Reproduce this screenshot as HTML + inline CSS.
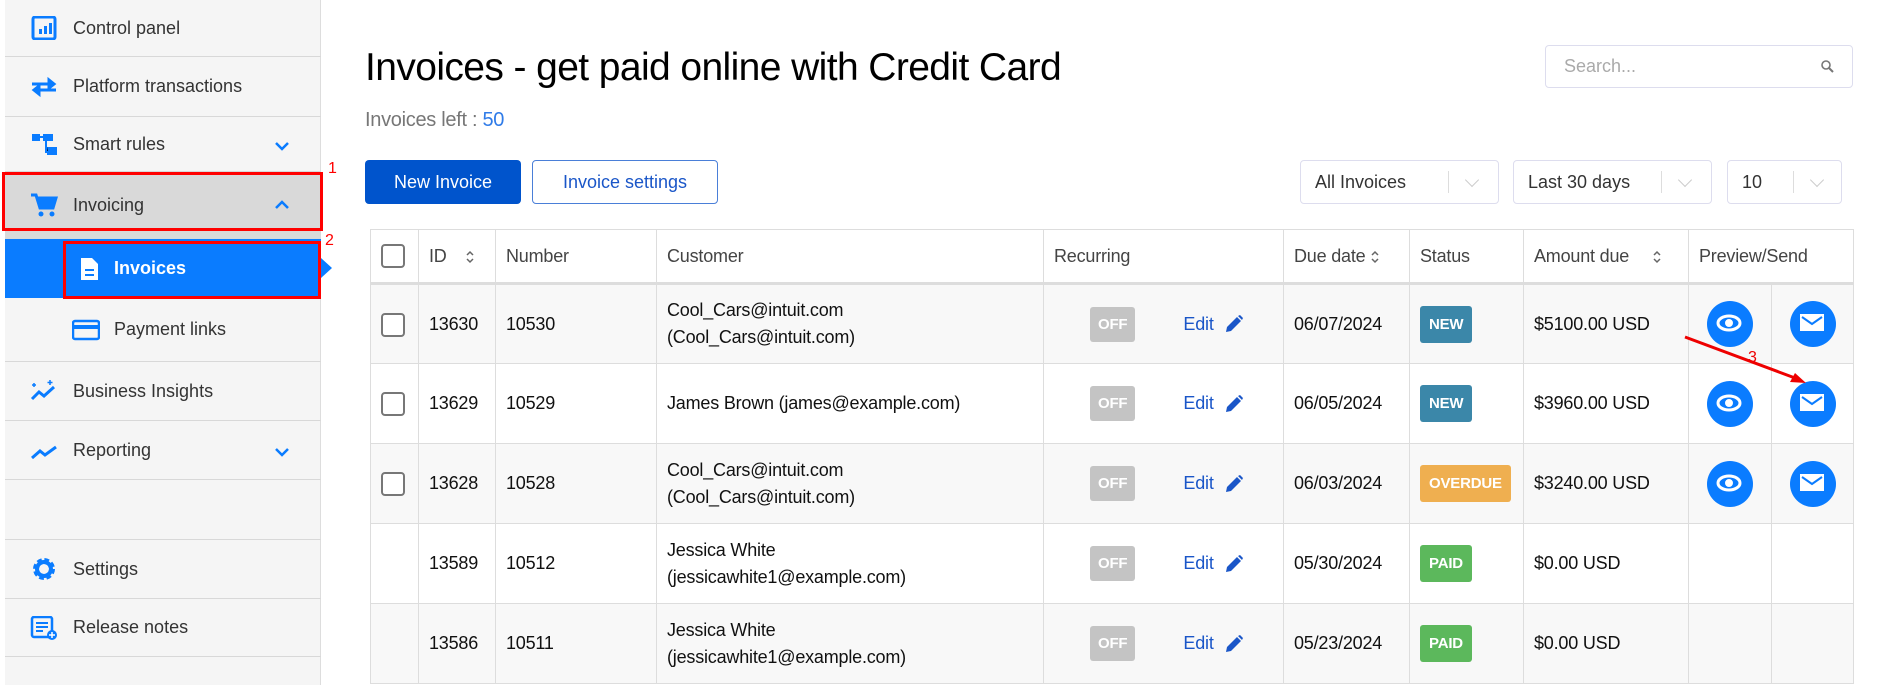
<!DOCTYPE html>
<html><head><meta charset="utf-8"><style>
*{box-sizing:border-box;margin:0;padding:0}
body{width:1897px;height:685px;overflow:hidden;background:#fff;font-family:"Liberation Sans",sans-serif;position:relative;color:#111}
.a{position:absolute}
.side{position:absolute;left:5px;top:0;width:316px;height:685px;background:#f5f5f5;border-right:1px solid #ddd}
.it{position:absolute;left:0;width:316px;border-bottom:1px solid #d8d8d8;font-size:18px;color:#333;display:flex;align-items:center}
.it .t{position:absolute;left:68px}
.it .ic{position:absolute;left:25px;width:28px;height:24px}
.chev{position:absolute;left:270px;width:14px;height:14px}
th,td{border:1px solid #ddd;font-size:18px;text-align:left;padding:0 10px;font-weight:normal;letter-spacing:-0.2px}
table{border-collapse:collapse;position:absolute;left:370px;top:229px;width:1484px}
th{color:#444;height:54px}
td{height:80px;color:#111;line-height:27px}
tr.g td{background:#f8f8f8}
.cb{width:24px;height:24px;border:2px solid #777;border-radius:4px;display:inline-block;vertical-align:middle;background:#fff}
.off{display:inline-block;background:#c4c4c4;color:#fff;font-weight:bold;font-size:15px;padding:4px 8px;border-radius:3px;vertical-align:middle}
.bd{display:inline-block;color:#fff;font-weight:bold;font-size:15px;padding:5px 9px;border-radius:3px}
.edit{color:#1a56c8;margin-left:48px;vertical-align:middle}
.pen{display:inline-block;vertical-align:middle;margin-left:10px}
.circ{display:inline-block;width:46px;height:46px;border-radius:50%;background:#0a7cff;vertical-align:middle;position:relative}
.btn{position:absolute;top:160px;height:44px;font-size:18px;border-radius:4px;display:flex;align-items:center;justify-content:center}
.dd{position:absolute;top:160px;height:44px;border:1px solid #dde;border-radius:4px;font-size:18px;color:#333;padding-left:14px;line-height:42px}
.dd i{position:absolute;top:10px;width:1px;height:22px;background:#ddd}
.dd b{position:absolute;top:14px;width:10px;height:10px;border-right:1.5px solid #ccc;border-bottom:1.5px solid #ccc;transform:rotate(45deg)}
.so{display:inline-block;vertical-align:middle}
</style></head><body>
<div class="side">
 <div class="it" style="top:0;height:57px"><svg class="ic" viewBox="0 0 28 24"><rect x="3" y="1" width="22" height="22" rx="2" fill="none" stroke="#0a7cff" stroke-width="3"/><rect x="9" y="13" width="3" height="5" fill="#0a7cff"/><rect x="14" y="10" width="3" height="8" fill="#0a7cff"/><rect x="19" y="7" width="3" height="11" fill="#0a7cff"/></svg><span class="t">Control panel</span></div>
 <div class="it" style="top:57px;height:60px"><svg class="ic" viewBox="0 0 28 24"><path d="M8 15h18M4 15l5-4v8zM2 9h18M24 9l-5-4v8z" fill="#0a7cff" stroke="#0a7cff" stroke-width="3"/></svg><span class="t">Platform transactions</span></div>
 <div class="it" style="top:117px;height:55px"><svg class="ic" viewBox="0 0 28 24"><rect x="2" y="2" width="8" height="7" fill="#0a7cff"/><rect x="13" y="2" width="10" height="7" fill="#0a7cff"/><rect x="17" y="15" width="10" height="8" fill="#0a7cff"/><path d="M10 5h4M16 9v11h2" stroke="#0a7cff" stroke-width="2"/></svg><span class="t">Smart rules</span><svg class="chev" viewBox="0 0 14 14" style="top:22px"><path d="M1 4l6 6 6-6" fill="none" stroke="#0a7cff" stroke-width="2.5"/></svg></div>
 <div class="it" style="top:172px;height:67px;background:#d9d9d9"><svg class="ic" viewBox="0 0 28 24"><path d="M1 2h5l4 13h13l3-10H8" fill="none" stroke="#0a7cff" stroke-width="3"/><path d="M8 5h18l-3 10H10z" fill="#0a7cff"/><circle cx="11" cy="21" r="2.5" fill="#0a7cff"/><circle cx="22" cy="21" r="2.5" fill="#0a7cff"/></svg><span class="t">Invoicing</span><svg class="chev" viewBox="0 0 14 14" style="top:26px"><path d="M1 10l6-6 6 6" fill="none" stroke="#0a7cff" stroke-width="2.5"/></svg></div>
 <div class="it" style="top:239px;height:59px;background:#0a7cff;color:#fff;border:none;font-weight:bold"><svg class="ic" style="left:70px" viewBox="0 0 28 24"><path d="M6 1h11l6 6v16H6z" fill="#fff"/><path d="M10 13h9M10 18h9" stroke="#0a7cff" stroke-width="2"/></svg><span class="t" style="left:109px">Invoices</span></div>
 <div class="it" style="top:298px;height:64px"><svg class="ic" style="left:67px" viewBox="0 0 28 24"><rect x="1" y="3" width="26" height="18" rx="2" fill="none" stroke="#0a7cff" stroke-width="2.5"/><rect x="1" y="7" width="26" height="4" fill="#0a7cff"/></svg><span class="t" style="left:109px">Payment links</span></div>
 <div class="it" style="top:362px;height:59px"><svg class="ic" viewBox="0 0 28 24"><path d="M2 20l7-7 5 4 10-9" fill="none" stroke="#0a7cff" stroke-width="3"/><path d="M4 4v4M2 6h4M20 1v5M17.5 3.5h5" stroke="#0a7cff" stroke-width="1.5"/></svg><span class="t">Business Insights</span></div>
 <div class="it" style="top:421px;height:59px"><svg class="ic" viewBox="0 0 28 24"><path d="M2 20l8-7 5 4 11-8" fill="none" stroke="#0a7cff" stroke-width="3"/></svg><span class="t">Reporting</span><svg class="chev" viewBox="0 0 14 14" style="top:24px"><path d="M1 4l6 6 6-6" fill="none" stroke="#0a7cff" stroke-width="2.5"/></svg></div>
 <div class="it" style="top:480px;height:60px"></div>
 <div class="it" style="top:540px;height:59px"><svg class="ic" viewBox="0 0 28 24"><circle cx="14" cy="12" r="8" fill="none" stroke="#0a7cff" stroke-width="6" stroke-dasharray="4 2.3"/><circle cx="14" cy="12" r="7" fill="none" stroke="#0a7cff" stroke-width="4"/></svg><span class="t">Settings</span></div>
 <div class="it" style="top:599px;height:58px"><svg class="ic" viewBox="0 0 28 24"><rect x="2" y="1" width="20" height="20" rx="2" fill="none" stroke="#0a7cff" stroke-width="2.5"/><path d="M6 7h12M6 11h12M6 15h7" stroke="#0a7cff" stroke-width="2"/><circle cx="22" cy="19" r="5" fill="#0a7cff"/><path d="M22 16v6M19 19h6" stroke="#fff" stroke-width="1.5"/></svg><span class="t">Release notes</span></div>
</div>
<div class="a" style="left:321px;top:258px;width:0;height:0;border-top:10px solid transparent;border-bottom:10px solid transparent;border-left:11px solid #0a7cff"></div>
<div class="a" style="left:2px;top:172px;width:321px;height:59px;border:3px solid #f00"></div>
<div class="a" style="left:63px;top:241px;width:258px;height:58px;border:3px solid #f00"></div>
<div class="a" style="left:328px;top:160px;color:#f00;font-size:16px">1</div>
<div class="a" style="left:325px;top:232px;color:#f00;font-size:16px">2</div>

<div class="a" style="left:365px;top:46px;font-size:39px;color:#000;letter-spacing:-0.6px">Invoices - get paid online with Credit Card</div>
<div class="a" style="left:365px;top:109px;font-size:20px;color:#777;letter-spacing:-0.3px">Invoices left : <span style="color:#2f7be8">50</span></div>
<div class="btn" style="left:365px;width:156px;background:#0054cc;color:#fff">New Invoice</div>
<div class="btn" style="left:532px;width:186px;border:1px solid #4a7fd8;color:#1a56c8">Invoice settings</div>
<div class="a" style="left:1545px;top:45px;width:308px;height:43px;border:1px solid #dde;border-radius:4px;font-size:18px;color:#aaa;padding:10px 18px">Search...<svg class="a" style="right:16px;top:13px" width="16" height="16" viewBox="0 0 16 16"><circle cx="6" cy="6" r="4" fill="none" stroke="#777" stroke-width="1.6"/><path d="M9 9l4 4" stroke="#777" stroke-width="2"/></svg></div>
<div class="dd" style="left:1300px;width:199px">All Invoices<i style="left:147px"></i><b style="left:166px"></b></div>
<div class="dd" style="left:1513px;width:199px">Last 30 days<i style="left:147px"></i><b style="left:166px"></b></div>
<div class="dd" style="left:1727px;width:115px">10<i style="left:65px"></i><b style="left:84px"></b></div>

<table>
<tr style="border-bottom:3px solid #ddd"><th style="width:48px"><span class="cb"></span></th><th style="width:77px">ID <svg class="so" style="margin-left:14px" width="10" height="16" viewBox="0 0 10 16"><path d="M2 6l3-3 3 3M2 10l3 3 3-3" fill="none" stroke="#666" stroke-width="1.5"/></svg></th><th style="width:161px">Number</th><th style="width:387px">Customer</th><th style="width:240px">Recurring</th><th style="width:126px">Due date <svg class="so" width="10" height="16" viewBox="0 0 10 16"><path d="M2 6l3-3 3 3M2 10l3 3 3-3" fill="none" stroke="#666" stroke-width="1.5"/></svg></th><th style="width:114px">Status</th><th style="width:165px">Amount due <svg class="so" style="margin-left:18px" width="10" height="16" viewBox="0 0 10 16"><path d="M2 6l3-3 3 3M2 10l3 3 3-3" fill="none" stroke="#666" stroke-width="1.5"/></svg></th><th colspan="2">Preview/Send</th></tr>
<tr class="g"><td><span class="cb"></span></td><td>13630</td><td>10530</td><td>Cool_Cars@intuit.com<br>(Cool_Cars@intuit.com)</td><td style="padding-left:46px"><span class="off">OFF</span><span class="edit">Edit</span><svg class="pen" width="20" height="20" viewBox="0 0 20 20"><path d="M2 18l1-5 10-10 4 4-10 10zM14 2l2-1 3 3-1 2z" fill="#1a56c8"/></svg></td><td>06/07/2024</td><td><span class="bd" style="background:#3b87a9">NEW</span></td><td>$5100.00 USD</td><td style="width:83px;text-align:center"><span class="circ"></span></td><td style="text-align:center"><span class="circ"></span></td></tr>
<tr><td><span class="cb"></span></td><td>13629</td><td>10529</td><td>James Brown (james@example.com)</td><td style="padding-left:46px"><span class="off">OFF</span><span class="edit">Edit</span><svg class="pen" width="20" height="20" viewBox="0 0 20 20"><path d="M2 18l1-5 10-10 4 4-10 10zM14 2l2-1 3 3-1 2z" fill="#1a56c8"/></svg></td><td>06/05/2024</td><td><span class="bd" style="background:#3b87a9">NEW</span></td><td>$3960.00 USD</td><td style="text-align:center"><span class="circ"></span></td><td style="text-align:center"><span class="circ"></span></td></tr>
<tr class="g"><td><span class="cb"></span></td><td>13628</td><td>10528</td><td>Cool_Cars@intuit.com<br>(Cool_Cars@intuit.com)</td><td style="padding-left:46px"><span class="off">OFF</span><span class="edit">Edit</span><svg class="pen" width="20" height="20" viewBox="0 0 20 20"><path d="M2 18l1-5 10-10 4 4-10 10zM14 2l2-1 3 3-1 2z" fill="#1a56c8"/></svg></td><td>06/03/2024</td><td><span class="bd" style="background:#efaf50">OVERDUE</span></td><td>$3240.00 USD</td><td style="text-align:center"><span class="circ"></span></td><td style="text-align:center"><span class="circ"></span></td></tr>
<tr><td></td><td>13589</td><td>10512</td><td>Jessica White<br>(jessicawhite1@example.com)</td><td style="padding-left:46px"><span class="off">OFF</span><span class="edit">Edit</span><svg class="pen" width="20" height="20" viewBox="0 0 20 20"><path d="M2 18l1-5 10-10 4 4-10 10zM14 2l2-1 3 3-1 2z" fill="#1a56c8"/></svg></td><td>05/30/2024</td><td><span class="bd" style="background:#5cb85c">PAID</span></td><td>$0.00 USD</td><td></td><td></td></tr>
<tr class="g"><td></td><td>13586</td><td>10511</td><td>Jessica White<br>(jessicawhite1@example.com)</td><td style="padding-left:46px"><span class="off">OFF</span><span class="edit">Edit</span><svg class="pen" width="20" height="20" viewBox="0 0 20 20"><path d="M2 18l1-5 10-10 4 4-10 10zM14 2l2-1 3 3-1 2z" fill="#1a56c8"/></svg></td><td>05/23/2024</td><td><span class="bd" style="background:#5cb85c">PAID</span></td><td>$0.00 USD</td><td></td><td></td></tr>
</table>
<svg class="a" style="left:0;top:0" width="1897" height="685">
<g fill="none" stroke="#fff" stroke-width="3">
<g transform="translate(1729,323)"><ellipse rx="11" ry="7"/><circle r="2.5" fill="#fff"/></g>
<g transform="translate(1729,403)"><ellipse rx="11" ry="7"/><circle r="2.5" fill="#fff"/></g>
<g transform="translate(1729,483)"><ellipse rx="11" ry="7"/><circle r="2.5" fill="#fff"/></g>
</g>
<g fill="#fff">
<path d="M1800 314h24v17h-24z"/>
<path d="M1800 394h24v17h-24z"/>
<path d="M1800 474h24v17h-24z"/>
</g>
<g fill="none" stroke="#0a7cff" stroke-width="2"><path d="M1802 317l10 7 10-7M1802 397l10 7 10-7M1802 477l10 7 10-7"/></g>
<line x1="1685" y1="337" x2="1795" y2="378" stroke="#e00" stroke-width="3"/>
<path d="M1806 383l-16-1 5-9z" fill="#e00"/>
<text x="1748" y="362" fill="#e00" font-size="16" font-family="Liberation Sans">3</text>
</svg>
</body></html>
